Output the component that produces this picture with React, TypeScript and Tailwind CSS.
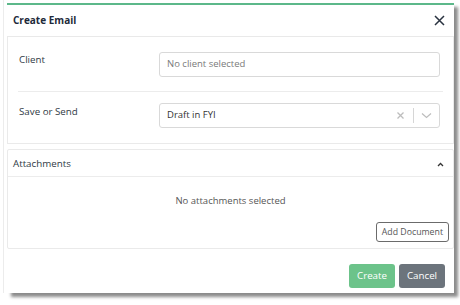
import React from "react";

export default function App() {
  return (
    <div className="w-[460px] h-[305px] bg-white relative overflow-hidden" style={{ fontFamily: '"Open Sans", "Noto Sans", sans-serif' }}>
      <div className="absolute left-[3px] top-0 w-px h-[293px] bg-[#ececec]" />
      <div className="absolute left-[7px] top-[3px] w-[447px] h-[290px] bg-white flex flex-col border-t-2 border-[#5cb88a] shadow-[4px_4px_3px_rgba(0,0,0,0.45)]">
        <div className="h-[32px] shrink-0 flex items-center justify-between pl-[6px] pr-[9px] border-b border-[#e9e9e9]">
          <span className="text-[10px] font-bold text-[#1e2a3a]">Create Email</span>
          <svg width="11" height="11" viewBox="0 0 11 11" className="text-[#2a3340]">
            <path d="M1 1 L10 10 M10 1 L1 10" stroke="currentColor" strokeWidth="1.5" />
          </svg>
        </div>
        <div className="shrink-0 h-[107px] border-x border-b border-[#eaeaea] px-[10px] flex flex-col">
          <div className="flex items-start pt-[15px] pb-[14px] border-b border-[#ececec]">
            <div className="w-[141px] pl-[1px] pt-[1px] text-[9.75px] text-[#2f3a45]">Client</div>
            <div className="w-[281px] h-[25px] border border-[#d9d9d9] rounded-[3px] flex items-center px-[7px] text-[9.5px] text-[#7a7a7a]">No client selected</div>
          </div>
          <div className="flex items-start pt-[11px]">
            <div className="w-[141px] pl-[1px] pt-[2px] text-[9.75px] text-[#2f3a45]">Save or Send</div>
            <div className="w-[281px] h-[25px] border border-[#d9d9d9] rounded-[3px] flex items-center pl-[7px] text-[9.5px] text-[#333]">
              <span className="flex-1">Draft in FYI</span>
              <svg width="9" height="9" viewBox="0 0 9 9" className="text-[#bdbdbd] mr-[8px]">
                <path d="M1.5 1.5 L7.5 7.5 M7.5 1.5 L1.5 7.5" stroke="currentColor" strokeWidth="1.3" />
              </svg>
              <div className="w-px h-[15px] bg-[#d6d6d6]" />
              <svg width="11" height="7" viewBox="0 0 11 7" className="text-[#bdbdbd] mx-[7px]">
                <path d="M1 1.5 L5.5 5.5 L10 1.5" stroke="currentColor" strokeWidth="1.2" fill="none" />
              </svg>
            </div>
          </div>
        </div>
        <div className="shrink-0 h-[5px]" />
        <div className="shrink-0 h-[100px] border border-[#eaeaea] rounded-[2px] flex flex-col">
          <div className="h-[27px] shrink-0 flex items-center justify-between pl-[5px] pr-[9px] pt-[3px] border-b border-[#ececec]">
            <span className="text-[9.75px] text-[#2f3a45]">Attachments</span>
            <svg width="7" height="5" viewBox="0 0 7 5" className="text-[#333]">
              <path d="M1 4 L3.5 1.5 L6 4" stroke="currentColor" strokeWidth="1.3" fill="none" />
            </svg>
          </div>
          <div className="flex-1 flex flex-col px-[4px]">
            <div className="text-center text-[9.5px] text-[#555] mt-[17px]">No attachments selected</div>
            <div className="flex justify-end mt-[14px]">
              <div className="h-[20px] px-[5px] border border-[#6b6b6b] rounded-[3px] flex items-center text-[8.75px] text-[#555]">Add Document</div>
            </div>
          </div>
        </div>
        <div className="flex-1 flex justify-end items-start pt-[15px] pr-[9px] gap-[4px]">
          <div className="w-[46px] h-[24px] rounded-[3px] bg-[#6cc38a] text-white text-[9.75px] flex items-center justify-center">Create</div>
          <div className="w-[46px] h-[24px] rounded-[3px] bg-[#6c747c] text-white text-[9.75px] flex items-center justify-center">Cancel</div>
        </div>
      </div>
    </div>
  );
}
